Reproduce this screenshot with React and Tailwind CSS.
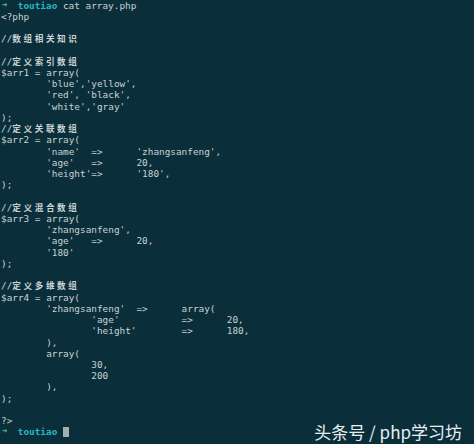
const lines = [
  null,
  "<?php",
  "",
  "//数组相关知识",
  "",
  "//定义索引数组",
  "$arr1 = array(",
  "        'blue','yellow',",
  "        'red', 'black',",
  "        'white','gray'",
  ");",
  "//定义关联数组",
  "$arr2 = array(",
  "        'name'  =>      'zhangsanfeng',",
  "        'age'   =>      20,",
  "        'height'=>      '180',",
  ");",
  "",
  "//定义混合数组",
  "$arr3 = array(",
  "        'zhangsanfeng',",
  "        'age'   =>      20,",
  "        '180'",
  ");",
  "",
  "//定义多维数组",
  "$arr4 = array(",
  "        'zhangsanfeng'  =>      array(",
  "                'age'           =>      20,",
  "                'height'        =>      180,",
  "        ),",
  "        array(",
  "                30,",
  "                200",
  "        ),",
  ");",
  "",
  "?>",
  null,
];

// CJK in the terminal takes two cells
const renderLine = (text) =>
  text.split(/([\u4e00-\u9fff]+)/).map((part, i) =>
    /[\u4e00-\u9fff]/.test(part) ? (
      <span
        key={i}
        className="font-['Noto_Sans_CJK_SC',sans-serif] font-bold text-[8.6px] tracking-[2.6px]"
      >
        {part}
      </span>
    ) : (
      <span key={i}>{part}</span>
    )
  );

const Prompt = ({ children }) => (
  <div className="flex items-center h-[11.24px]">
    <span className="text-[#3cc46e] w-[16.8px] pl-[1px] text-[9px] font-bold">➜</span>
    <span className="text-[#2bb3c2] font-bold">toutiao</span>
    {children}
  </div>
);

export default function App() {
  return (
    <div className="relative w-[474px] h-[444px] overflow-hidden bg-[#0b2f3a]">
      <div className="-mt-[0.5px] pl-[1px] font-['DejaVu_Sans_Mono',monospace] text-[9.4px] leading-[11.24px] text-[#c8d2d4] whitespace-pre">
        {lines.map((line, i) =>
          line === null ? (
            i === 0 ? (
              <Prompt key={i}>
                <span> cat array.php</span>
              </Prompt>
            ) : (
              <Prompt key={i}>
                <span> </span>
                <span className="inline-block w-[6px] h-[10px] bg-[#a3aeb1]" />
              </Prompt>
            )
          ) : (
            <div key={i} className="h-[11.24px]">
              {line === "" ? " " : renderLine(line)}
            </div>
          )
        )}
      </div>

      {/* watermark */}
      <div className="absolute right-[12px] bottom-[4px] font-['Noto_Sans_CJK_SC',sans-serif] text-[17px] leading-none text-[#e9eff1]">
        头条号 / php学习坊
      </div>
    </div>
  );
}
